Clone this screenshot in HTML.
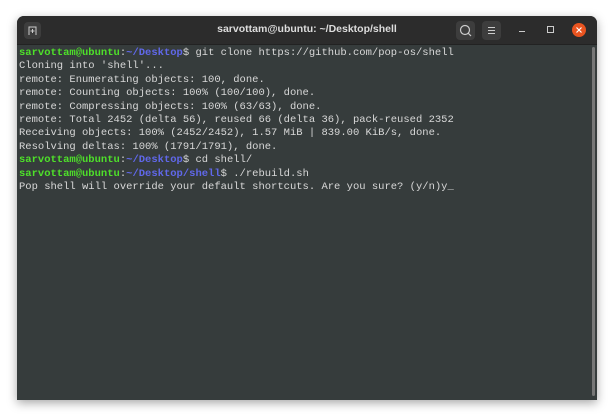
<!DOCTYPE html><html><head><style>
body{margin:0;width:614px;height:420px;background:#fff;position:relative;overflow:hidden;font-family:"Liberation Sans",sans-serif}
.win{position:absolute;left:17px;top:16px;width:580px;height:384px;background:#363c3c;border-radius:7px 7px 0 0;box-shadow:0 3px 10px rgba(0,0,0,.35);overflow:hidden}
.tb{position:absolute;left:0;top:0;width:580px;height:28px;background:#2c2c2c;border-bottom:1px solid #222}
.title{position:absolute;left:0;right:0;top:7px;text-align:center;color:#ddd;font-size:10.5px;font-weight:bold}
.btn{position:absolute;top:5px;width:19px;height:19px;background:#3d3d3d;border-radius:4px}
.term{position:absolute;left:2px;top:31px;font-family:"Liberation Mono",monospace;font-size:10.5px;line-height:13.4px;color:#d8d8d8;white-space:pre}
.g{color:#4ee02a;font-weight:bold}.b{color:#6068ea;font-weight:bold}
.sb{position:absolute;right:2px;top:31px;width:3px;height:349px;background:#777;border-radius:2px}
</style></head><body>
<div class="win">
<div class="tb">
<div class="btn" style="left:7px;width:17px;height:17px;top:6px"><svg width="17" height="17"><path d="M5 13V5h7v8" fill="none" stroke="#ccc" stroke-width="1"/><path d="M8.5 7v4M6.5 9h4" stroke="#ccc"/></svg></div>
<div class="title">sarvottam@ubuntu: ~/Desktop/shell</div>
<div class="btn" style="left:439px"><svg width="19" height="19"><circle cx="9" cy="9" r="4.5" fill="none" stroke="#ccc" stroke-width="1.2"/><path d="M12 12l3 3" stroke="#ccc" stroke-width="1.2"/></svg></div>
<div class="btn" style="left:465px"><svg width="19" height="19"><path d="M6 6.5h7M6 9.5h7M6 12.5h7" stroke="#ccc"/></svg></div>
<div style="position:absolute;left:502px;top:15px;width:6px;height:1px;background:#ccc"></div>
<div style="position:absolute;left:530px;top:10px;width:5px;height:5px;border:1px solid #ccc"></div>
<div style="position:absolute;left:555px;top:7px;width:14px;height:14px;border-radius:50%;background:#e95420"><svg width="14" height="14"><path d="M4.5 4.5l5 5M9.5 4.5l-5 5" stroke="#fff" stroke-width="1.2"/></svg></div>
</div>
<div class="term"><span class="g">sarvottam@ubuntu</span>:<span class="b">~/Desktop</span>$ git clone https://github.com/pop-os/shell
Cloning into 'shell'...
remote: Enumerating objects: 100, done.
remote: Counting objects: 100% (100/100), done.
remote: Compressing objects: 100% (63/63), done.
remote: Total 2452 (delta 56), reused 66 (delta 36), pack-reused 2352
Receiving objects: 100% (2452/2452), 1.57 MiB | 839.00 KiB/s, done.
Resolving deltas: 100% (1791/1791), done.
<span class="g">sarvottam@ubuntu</span>:<span class="b">~/Desktop</span>$ cd shell/
<span class="g">sarvottam@ubuntu</span>:<span class="b">~/Desktop/shell</span>$ ./rebuild.sh
Pop shell will override your default shortcuts. Are you sure? (y/n)y_</div>
<div class="sb"></div>
</div>
</body></html>
